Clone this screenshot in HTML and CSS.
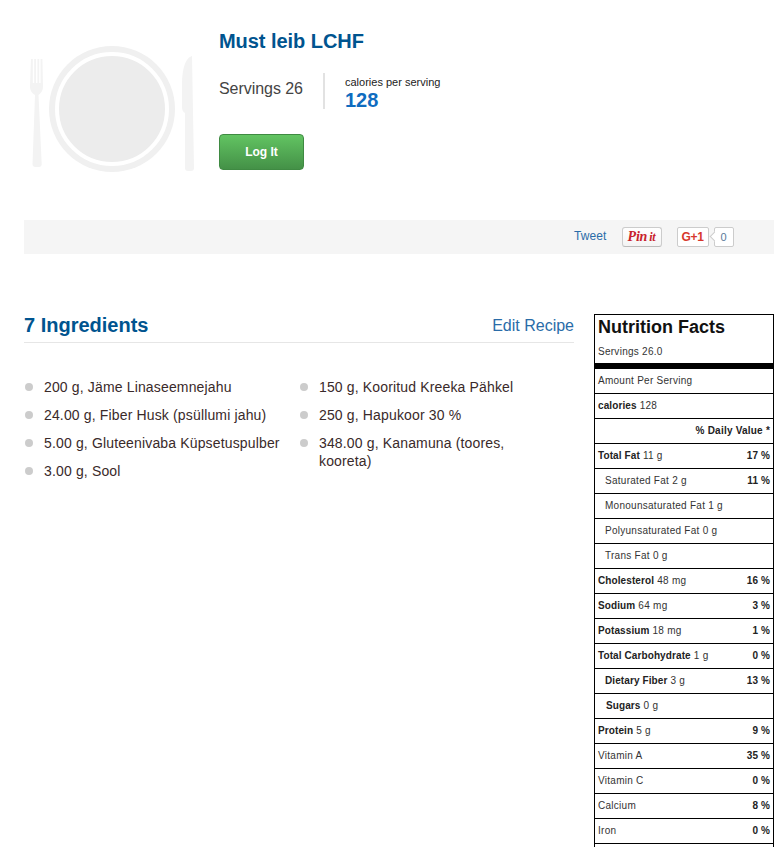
FILE: index.html
```html
<!DOCTYPE html>
<html lang="et">
    <head>
        <meta charset="UTF-8" />
        <meta name="viewport" content="width=device-width, initial-scale=1.0" />
        <title>Must leib LCHF</title>
        <link rel="stylesheet" href="styles.css">
    </head>
    <body>
        <section class="recipe-head">
            <svg class="plate" width="171" height="118" viewBox="0 0 171 118" aria-hidden="true">
                <path class="cutlery" d="M2 4h1.800v24h1.400V4h1.800v24h1.400V4h1.800v24h1.400V4h1.800l.6 27c0 5-2 7-4.500 9L12.700 109q0 3-3 3H6.500q-3 0-3-3L6 40C3 38 1 36 1 31z"/>
                <path class="cutlery" d="M163 1C157 3 153 12 153 30V52c0 3 1 5 3 6V113c0 2 1 3 3 3h3c2 0 3-1 3-3L163 1z"/>
            </svg>
            <div class="plate-disc"><div class="plate-centre"></div></div>
            <div class="recipe-info">
                <h1>Must leib LCHF</h1>
                <div class="stats">
                    <span class="servings">Servings 26</span>
                    <div class="calories">
                        <span class="calories-label">calories per serving</span>
                        <strong>128</strong>
                    </div>
                </div>
                <button class="log-btn">Log It</button>
            </div>
        </section>

        <div class="share-bar">
            <a class="tweet" href="#">Tweet</a>
            <span class="pin">Pin<i>it</i></span>
            <span class="gplus">G+1</span>
            <span class="gcount">0</span>
        </div>

        <main class="content">
            <section class="ingredients">
                <div class="ingredients-head">
                    <h2>7 Ingredients</h2>
                    <a href="#">Edit Recipe</a>
                </div>
                <div class="ingredient-cols">
                    <ul>
                        <li>200 g, Jäme Linaseemnejahu</li>
                        <li>24.00 g, Fiber Husk (psüllumi jahu)</li>
                        <li>5.00 g, Gluteenivaba Küpsetuspulber</li>
                        <li>3.00 g, Sool</li>
                    </ul>
                    <ul>
                        <li>150 g, Kooritud Kreeka Pähkel</li>
                        <li>250 g, Hapukoor 30 %</li>
                        <li>348.00 g, Kanamuna (toores, kooreta)</li>
                    </ul>
                </div>
            </section>

            <aside class="facts">
                <div class="facts-title">Nutrition Facts</div>
                <div class="facts-servings">Servings 26.0</div>
                <div class="row">Amount Per Serving</div>
                <div class="row"><span><b>calories</b> 128</span></div>
                <div class="row right"><b class="daily">% Daily Value *</b></div>
                <div class="row"><span><b>Total Fat</b> 11 g</span><b>17 %</b></div>
                <div class="row sub"><span>Saturated Fat 2 g</span><b>11 %</b></div>
                <div class="row sub"><span>Monounsaturated Fat 1 g</span></div>
                <div class="row sub"><span>Polyunsaturated Fat 0 g</span></div>
                <div class="row sub"><span>Trans Fat 0 g</span></div>
                <div class="row"><span><b>Cholesterol</b> 48 mg</span><b>16 %</b></div>
                <div class="row"><span><b>Sodium</b> 64 mg</span><b>3 %</b></div>
                <div class="row"><span><b>Potassium</b> 18 mg</span><b>1 %</b></div>
                <div class="row"><span><b>Total Carbohydrate</b> 1 g</span><b>0 %</b></div>
                <div class="row sub"><span><b>Dietary Fiber</b> 3 g</span><b>13 %</b></div>
                <div class="row sub sugars"><span><b>Sugars</b> 0 g</span></div>
                <div class="row"><span><b>Protein</b> 5 g</span><b>9 %</b></div>
                <div class="row"><span>Vitamin A</span><b>35 %</b></div>
                <div class="row"><span>Vitamin C</span><b>0 %</b></div>
                <div class="row"><span>Calcium</span><b>8 %</b></div>
                <div class="row"><span>Iron</span><b>0 %</b></div>
                <div class="row"></div>
            </aside>
        </main>
    </body>
</html>
```

FILE: styles.css
```css
html, body {
    margin: 0;
    height: 847px;
    overflow: hidden;
}
body {
    font-family: "Liberation Sans", Arial, sans-serif;
    background: white;
    color: #333;
    padding-left: 24px;
    width: 750px;
}
.recipe-head {
    display: flex;
    height: 220px;
    position: relative;
}
.plate {
    position: absolute;
    left: 5px;
    top: 55px;
}
.cutlery {
    fill: #f3f3f3;
}
.plate-disc {
    position: absolute;
    left: 25px;
    top: 46px;
    width: 114px;
    height: 114px;
    padding: 6px;
    border-radius: 50%;
    background: #f0f0f0;
}
.plate-centre {
    width: 106px;
    height: 106px;
    border: 4px solid white;
    border-radius: 50%;
    background: #ececec;
}
.recipe-info {
    margin-left: 195px;
    padding-top: 30px;
}
h1 {
    margin: 0;
    font-size: 20px;
    line-height: 23px;
    letter-spacing: -0.05px;
    color: #00548f;
}
.stats {
    display: flex;
    margin-top: 20px;
}
.servings {
    width: 104px;
    font-size: 16px;
    line-height: 32px;
    letter-spacing: -0.05px;
    color: #444;
}
.calories {
    border-left: 2px solid #e2e2e2;
    padding-left: 20px;
    height: 36px;
}
.calories-label {
    display: block;
    font-size: 11px;
    line-height: 12px;
    margin-top: 3px;
    color: #222;
}
.calories strong {
    display: block;
    margin-top: 2px;
    font-size: 20px;
    line-height: 20px;
    color: #0f6cbf;
}
.log-btn {
    display: block;
    margin-top: 25px;
    width: 85px;
    height: 36px;
    padding: 0;
    border: 1px solid #3f8a42;
    border-radius: 4px;
    background: linear-gradient(#62c462, #449147);
    color: white;
    font-family: inherit;
    font-size: 12px;
    font-weight: bold;
}
.share-bar {
    display: flex;
    align-items: center;
    height: 34px;
    background: #f5f5f5;
    padding-left: 550px;
    font-size: 12px;
}
.tweet {
    color: #2a6ca8;
    text-decoration: none;
    letter-spacing: 0.1px;
    margin-bottom: 2px;
}
.pin {
    box-sizing: border-box;
    width: 40px;
    height: 20px;
    margin-left: 15px;
    border: 1px solid #ccc;
    border-bottom-color: #bbb;
    border-radius: 3px;
    background: linear-gradient(white, #f4f4f4);
    color: #c8232c;
    font-family: "Liberation Serif", serif;
    font-size: 14px;
    font-style: italic;
    font-weight: bold;
    letter-spacing: -0.2px;
    line-height: 18px;
    text-align: center;
}
.pin i {
    margin-left: 2px;
    font-size: 12px;
}
.gplus {
    box-sizing: border-box;
    width: 32px;
    height: 20px;
    margin-left: 15px;
    border: 1px solid #ccc;
    border-radius: 2px;
    background: white;
    color: #d7372c;
    font-weight: bold;
    font-size: 12px;
    letter-spacing: -0.3px;
    line-height: 18px;
    text-align: center;
}
.gcount {
    box-sizing: border-box;
    width: 20px;
    height: 20px;
    margin-left: 5px;
    border: 1px solid #ccc;
    border-radius: 2px;
    background: white;
    color: #5a7a9a;
    font-size: 11px;
    line-height: 18px;
    text-align: center;
    position: relative;
}
.gcount::before {
    content: "";
    position: absolute;
    left: -4px;
    top: 5px;
    width: 6px;
    height: 6px;
    background: white;
    border-left: 1px solid #ccc;
    border-bottom: 1px solid #ccc;
    transform: rotate(45deg);
}
.content {
    display: flex;
    justify-content: space-between;
    margin-top: 60px;
}
.ingredients {
    width: 550px;
}
.ingredients-head {
    display: flex;
    justify-content: space-between;
    align-items: flex-start;
    height: 28px;
    border-bottom: 1px solid #e6e6e6;
}
h2 {
    margin: 0;
    font-size: 20px;
    line-height: 22px;
    color: #00548f;
}
.ingredients-head a {
    font-size: 16px;
    line-height: 24px;
    color: #2a6ca8;
    text-decoration: none;
}
.ingredient-cols {
    display: flex;
    margin-top: 30px;
}
.ingredient-cols ul {
    list-style: none;
    margin: 0;
    padding: 0;
    width: 276px;
}
.ingredient-cols li {
    position: relative;
    padding: 5px 60px 5px 20px;
    font-size: 14px;
    line-height: 18px;
    letter-spacing: 0.15px;
    color: #3a2a2a;
}
.ingredient-cols ul:first-child li {
    padding-right: 0;
}
.ingredient-cols li::before {
    content: "";
    position: absolute;
    left: 1px;
    top: 10px;
    width: 8px;
    height: 8px;
    border-radius: 50%;
    background: #ccc;
}
.facts {
    box-sizing: border-box;
    width: 180px;
    border: 1px solid black;
    border-bottom: 0;
    font-size: 10px;
    letter-spacing: 0.27px;
    color: #333;
}
.facts b {
    color: #222;
    letter-spacing: 0.1px;
}
.facts b.daily {
    letter-spacing: 0.22px;
}
.facts-title {
    padding: 3px 3px 0;
    font-size: 18px;
    font-weight: bold;
    letter-spacing: 0;
    line-height: 19px;
    color: #111;
}
.facts-servings {
    padding: 6px 3px 0;
    height: 20px;
    line-height: 17px;
    border-bottom: 6px solid black;
}
.row {
    box-sizing: border-box;
    display: flex;
    justify-content: space-between;
    align-items: center;
    height: 25px;
    padding: 0 3px 2px;
    border-bottom: 1px solid black;
}
.row.right {
    justify-content: flex-end;
}
.row.sub {
    padding-left: 10px;
}
.row.sugars {
    padding-left: 11px;
}
```
